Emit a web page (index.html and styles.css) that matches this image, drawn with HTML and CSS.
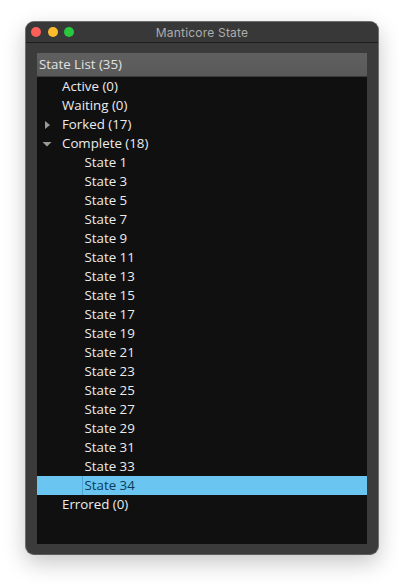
FILE: index.html
```html
<!DOCTYPE html>
<html lang="en">
<head>
<meta charset="utf-8">
<title>Manticore State</title>
<link rel="stylesheet" href="styles.css">
</head>
<body>
<div class="window">
  <div class="titlebar">
    <div class="lights"><span class="light red"></span><span class="light yellow"></span><span class="light green"></span></div>
    <div class="title">Manticore State</div>
  </div>
  <div class="content">
    <div class="header">State List (35)</div>
    <div class="tree">
      <div class="row top">Active (0)</div>
      <div class="row top">Waiting (0)</div>
      <div class="row top"><svg class="arrow" viewBox="0 0 10 10"><path d="M3 1L8 5L3 9Z"/></svg>Forked (17)</div>
      <div class="row top"><svg class="arrow" viewBox="0 0 10 10"><path d="M0.5 3H9.5L5 7.5Z"/></svg>Complete (18)</div>
      <div class="row leaf">State 1</div>
      <div class="row leaf">State 3</div>
      <div class="row leaf">State 5</div>
      <div class="row leaf">State 7</div>
      <div class="row leaf">State 9</div>
      <div class="row leaf">State 11</div>
      <div class="row leaf">State 13</div>
      <div class="row leaf">State 15</div>
      <div class="row leaf">State 17</div>
      <div class="row leaf">State 19</div>
      <div class="row leaf">State 21</div>
      <div class="row leaf">State 23</div>
      <div class="row leaf">State 25</div>
      <div class="row leaf">State 27</div>
      <div class="row leaf">State 29</div>
      <div class="row leaf">State 31</div>
      <div class="row leaf">State 33</div>
      <div class="row leaf selected">State 34</div>
      <div class="row top">Errored (0)</div>
    </div>
  </div>
</div>
</body>
</html>
```
FILE: styles.css
```css
html, body {
  margin: 0;
  height: 100%;
  background: #ffffff;
  overflow: hidden;
}
body {
  padding: 21px 25px 31px 25px;
  box-sizing: border-box;
  width: 404px;
  height: 586px;
  font-family: "Open Sans", sans-serif;
}
.window {
  width: 354px;
  height: 534px;
  box-sizing: border-box;
  display: flex;
  flex-direction: column;
  background: #3b3b3b;
  border-radius: 9px;
  border: 1px solid #6e6e6e;
  border-bottom-color: #5c5c5c;
  box-shadow: 0 8px 22px rgba(0, 0, 0, 0.22);
  overflow: hidden;
}
.titlebar {
  height: 20px;
  flex: none;
  display: flex;
  align-items: center;
  justify-content: center;
  position: relative;
  background: #383838;
  border-bottom: 1px solid #1c1c1c;
}
.lights {
  position: absolute;
  left: 5px;
  top: 5px;
  display: flex;
  gap: 6.5px;
}
.light {
  width: 10px;
  height: 10px;
  border-radius: 50%;
}
.red { background: #fb5f57; }
.yellow { background: #fdbc2e; }
.green { background: #28c83f; }
.title {
  font-family: Inter, sans-serif;
  font-size: 12px;
  letter-spacing: 0.2px;
  color: #adadad;
}
.content {
  flex: 1;
  display: flex;
  flex-direction: column;
  padding: 10px 11px 10px 11px;
  min-height: 0;
}
.header {
  height: 24px;
  flex: none;
  box-sizing: border-box;
  padding-left: 2px;
  line-height: 23px;
  font-size: 13.3px;
  color: #e2e2e2;
  background: linear-gradient(#606060, #595959);
  border-bottom: 1px solid #3b3b3b;
}
.tree {
  flex: 1;
  background: #101010;
  min-height: 0;
}
.row {
  height: 19px;
  line-height: 19px;
  font-size: 13.3px;
  color: #ececec;
  position: relative;
  white-space: nowrap;
}
.top { padding-left: 25px; }
.leaf { padding-left: 47.5px; }
.arrow {
  position: absolute;
  left: 5px;
  top: 4.5px;
  width: 10px;
  height: 10px;
  fill: #9a9a9a;
}
.selected {
  background: #6ac6f1;
  color: #0d3c58;
}
.selected::before {
  content: "";
  position: absolute;
  left: 45px;
  top: 0;
  bottom: 0;
  width: 1px;
  background: #4fa6d4;
}
```
